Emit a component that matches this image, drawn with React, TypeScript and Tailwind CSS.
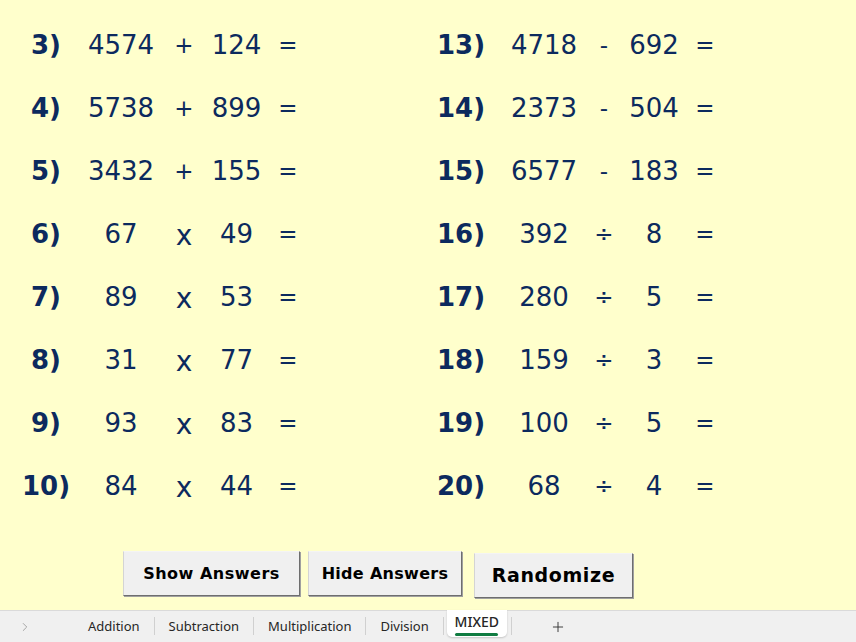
import React from 'react';
import { ChevronRight, Plus } from 'lucide-react';

type Problem = { n: number; a: number; op: string; b: number };

const left: Problem[] = [
  { n: 3, a: 4574, op: '+', b: 124 },
  { n: 4, a: 5738, op: '+', b: 899 },
  { n: 5, a: 3432, op: '+', b: 155 },
  { n: 6, a: 67, op: 'x', b: 49 },
  { n: 7, a: 89, op: 'x', b: 53 },
  { n: 8, a: 31, op: 'x', b: 77 },
  { n: 9, a: 93, op: 'x', b: 83 },
  { n: 10, a: 84, op: 'x', b: 44 },
];

const right: Problem[] = [
  { n: 13, a: 4718, op: '-', b: 692 },
  { n: 14, a: 2373, op: '-', b: 504 },
  { n: 15, a: 6577, op: '-', b: 183 },
  { n: 16, a: 392, op: '÷', b: 8 },
  { n: 17, a: 280, op: '÷', b: 5 },
  { n: 18, a: 159, op: '÷', b: 3 },
  { n: 19, a: 100, op: '÷', b: 5 },
  { n: 20, a: 68, op: '÷', b: 4 },
];

const tabs = ['Addition', 'Subtraction', 'Multiplication', 'Division'];

const Cell: React.FC<{ children: React.ReactNode; className?: string }> = ({ children, className = '' }) => (
  <div className={`flex justify-center items-center whitespace-nowrap ${className}`}>
    {children}
  </div>
);

const SheetButton: React.FC<{ label: string; className: string }> = ({ label, className }) => (
  <button
    className={`flex items-center justify-center bg-[#f0f0f0] border border-t-[#f4f4f4] border-l-[#d4d4d4] border-r-[#6e6e6e] border-b-[#6e6e6e] shadow-[1px_1px_0_#a0a0a0] font-bold text-black ${className}`}
    style={{ fontFamily: '"DejaVu Sans", sans-serif' }}
  >
    {label}
  </button>
);

export default function App() {
  return (
    <div className="w-[856px] h-[642px] overflow-hidden flex flex-col bg-[#ffffcc]">
      <div
        className="h-[610px] pt-[14px] text-[#0c2a5e] text-[26px]"
        style={{ fontFamily: '"DejaVu Sans", sans-serif' }}
      >
        {left.map((p, i) => {
          const r = right[i];
          return (
            <div
              key={p.n}
              className="grid h-[63px] grid-cols-[92px_58px_68px_37px_66px_100px_80px_86px_34px_66px_36px]"
            >
              <Cell className="font-bold">{p.n})</Cell>
              <Cell>{p.a}</Cell>
              <Cell className={p.op === 'x' ? 'text-[28px] pt-[3px]' : 'text-[23px]'}>{p.op}</Cell>
              <Cell>{p.b}</Cell>
              <Cell className="text-[23px]">=</Cell>
              <div />
              <Cell className="font-bold">{r.n})</Cell>
              <Cell>{r.a}</Cell>
              <Cell className="text-[23px]">{r.op}</Cell>
              <Cell>{r.b}</Cell>
              <Cell className="text-[23px]">=</Cell>
            </div>
          );
        })}

        <div className="flex items-start mt-[33px] ml-[123px]">
          <SheetButton label="Show Answers" className="w-[177px] h-[45px] text-[16px] tracking-[0.5px]" />
          <SheetButton label="Hide Answers" className="ml-[8px] w-[154px] h-[45px] text-[16px] tracking-[0.3px]" />
          <SheetButton label="Randomize" className="ml-[12px] mt-[2px] w-[159px] h-[45px] text-[19px] tracking-[0.6px]" />
        </div>
      </div>

      <div
        className="h-[32px] flex items-start bg-[#f0f0f0] border-t border-[#dadada] text-[13px] text-[#262626]"
        style={{ fontFamily: '"Noto Sans", sans-serif' }}
      >
        <div className="w-[50px] h-[31px] flex items-center justify-center text-[#9a9a9a]">
          <ChevronRight size={14} strokeWidth={1.5} />
        </div>
        <div className="flex items-start ml-[24px]">
          {tabs.map((t) => (
            <React.Fragment key={t}>
              <div className="h-[31px] px-[14px] flex items-center">{t}</div>
              <div className="w-px h-[18px] mt-[6px] bg-[#d0d0d0]" />
            </React.Fragment>
          ))}
          <div className="ml-[3px] w-[60px] h-[27px] -mt-px bg-white rounded-b-[5px] shadow-[0_1px_2px_rgba(0,0,0,0.18)] flex flex-col items-center pt-[3px]">
            <span className="font-medium text-[14px] leading-[18px]">MIXED</span>
            <span className="mt-[2px] w-[43px] h-[3px] rounded-full bg-[#107c41]" />
          </div>
          <div className="ml-[4px] w-px h-[18px] mt-[6px] bg-[#d0d0d0]" />
          <div className="ml-[38px] h-[31px] flex items-center text-[#333]">
            <Plus size={16} strokeWidth={1.4} />
          </div>
        </div>
      </div>
    </div>
  );
}
